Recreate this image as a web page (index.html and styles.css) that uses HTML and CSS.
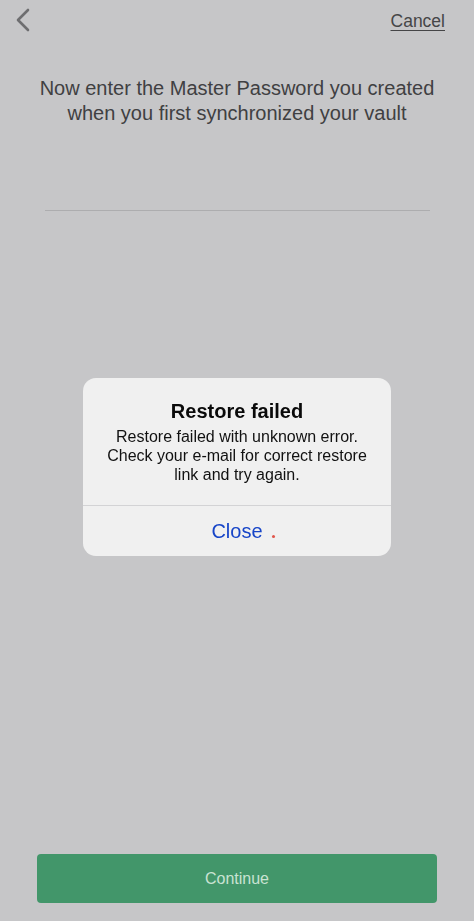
FILE: index.html
```html
<!DOCTYPE html>
<html lang="en">

<head>
    <meta charset="utf-8">
    <meta name="viewport" content="width=device-width, initial-scale=1">
    <title>Restore vault</title>
    <link rel="stylesheet" href="styles.css">
</head>

<body>

    <div class="screen">
        <!-- Top bar -->
        <header class="top-bar">
            <button class="back-button" aria-label="Back">
                <svg width="16" height="24" viewBox="0 0 16 24">
                    <path d="M13 2 L3 12 L13 22" fill="none" stroke="#6e6e70" stroke-width="2.6" stroke-linecap="round" stroke-linejoin="round" />
                </svg>
            </button>
            <a class="cancel-link" href="#">Cancel</a>
        </header>

        <!-- Password prompt -->
        <main class="prompt">
            <p class="prompt-text">Now enter the Master Password you created when you first synchronized your vault</p>
            <div class="password-field"></div>
        </main>

        <footer class="actions">
            <button class="continue-button">Continue</button>
        </footer>
    </div>

    <!-- Alert -->
    <div class="overlay">
        <div class="alert">
            <div class="alert-body">
                <h2 class="alert-title">Restore failed</h2>
                <p class="alert-message">Restore failed with unknown error. Check your e-mail for correct restore link and try again.</p>
            </div>
            <button class="alert-button">Close<span class="dot"></span></button>
        </div>
    </div>

</body>

</html>
```

FILE: styles.css
```css
* {
    box-sizing: border-box;
}

html,
body {
    margin: 0;
    padding: 0;
    height: 100%;
}

body {
    font-family: "Liberation Sans", Arial, sans-serif;
    background: #c6c6c8;
    color: #3a3a3c;
}

.screen {
    display: flex;
    flex-direction: column;
    height: 921px;
}

/* Barra superior */
.top-bar {
    display: flex;
    justify-content: space-between;
    align-items: flex-start;
    padding: 7px 29px 0 15px;
    height: 40px;
}

.back-button {
    background: none;
    border: none;
    padding: 0;
    width: 20px;
    height: 26px;
    display: flex;
    align-items: center;
}

.cancel-link {
    color: #454547;
    font-size: 17.5px;
    margin-top: 4px;
    text-decoration: underline;
    text-underline-offset: 3px;
    text-decoration-thickness: 1px;
}

/* Texto */
.prompt {
    flex: 1;
    padding: 36px 0 0;
}

.prompt-text {
    margin: 0 auto;
    width: 440px;
    font-size: 20px;
    line-height: 25px;
    text-align: center;
    color: #404042;
}

.password-field {
    margin: 84px 44px 0 45px;
    height: 1px;
    background: #adadaf;
}

/* Boton */
.actions {
    padding: 0 37px 18px;
}

.continue-button {
    width: 100%;
    height: 49px;
    border: none;
    border-radius: 4px;
    background: #42966a;
    color: #c9e3d2;
    font-family: "Liberation Sans", Arial, sans-serif;
    font-size: 16px;
}

/* Alerta */
.overlay {
    position: fixed;
    inset: 0;
    display: flex;
    justify-content: center;
    align-items: flex-start;
    padding-top: 378px;
}

.alert {
    width: 308px;
    background: #f0f0f0;
    border-radius: 13px;
    overflow: hidden;
}

.alert-body {
    padding: 21px 15px 21px;
    text-align: center;
    border-bottom: 1px solid #d3d3d5;
}

.alert-title {
    margin: 0 0 4px;
    font-size: 20px;
    line-height: 24px;
    font-weight: bold;
    color: #0a0a0a;
}

.alert-message {
    margin: 0;
    font-size: 16px;
    line-height: 19px;
    color: #111;
}

.alert-button {
    position: relative;
    display: block;
    width: 100%;
    height: 50px;
    border: none;
    background: none;
    font-family: "Liberation Sans", Arial, sans-serif;
    font-size: 20px;
    color: #1745c8;
}

.dot {
    position: absolute;
    width: 3px;
    height: 3px;
    border-radius: 50%;
    background: #e0544a;
    left: 189px;
    top: 29px;
}
```
